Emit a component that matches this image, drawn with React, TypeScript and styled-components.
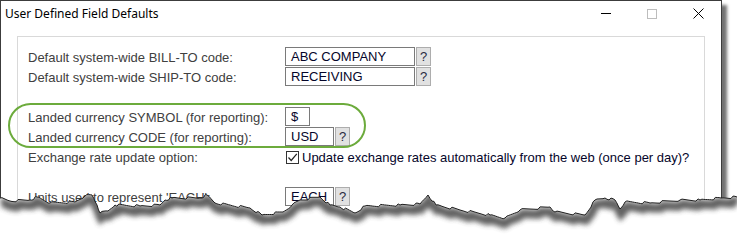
import styled, { createGlobalStyle } from "styled-components";

const GlobalStyle = createGlobalStyle`
  html, body {
    margin: 0;
    padding: 0;
    background: #ffffff;
  }
`;

const Page = styled.div`
  position: relative;
  width: 737px;
  height: 240px;
  overflow: hidden;
  background: #ffffff;
`;

const Window = styled.div`
  width: 722px;
  height: 270px;
  box-sizing: border-box;
  border: 1px solid #3c3c3c;
  background: #ffffff;
  box-shadow: 5px 5px 3px rgba(0, 0, 0, 0.55);
  display: flex;
  flex-direction: column;
`;

const TitleBar = styled.div`
  height: 30px;
  display: flex;
  align-items: flex-start;
  justify-content: space-between;
`;

const Title = styled.div`
  padding: 4px 0 0 4px;
  font-family: "Segoe UI", "Noto Sans", sans-serif;
  font-size: 12px;
  line-height: 17px;
  color: #000;
`;

const Controls = styled.div`
  display: flex;
`;

const CaptionButton = styled.div`
  width: 46px;
  height: 25px;
  display: flex;
  align-items: center;
  justify-content: center;
`;

const MinLine = styled.div`
  width: 10px;
  height: 1px;
  background: #000;
`;

const MaxBox = styled.div`
  width: 10px;
  height: 10px;
  box-sizing: border-box;
  border: 1px solid #bdbdbd;
`;

const GroupBox = styled.div`
  margin: 10px 16px 0 16px;
  border: 1px solid #d9d9d9;
  padding: 10px 10px 0 10px;
  height: 300px;
`;

const Row = styled.div`
  display: grid;
  grid-template-columns: 257px auto;
  align-items: center;
  height: 20px;
`;

const Spacer = styled.div`
  height: 20px;
`;

const Label = styled.div`
  font-family: "Liberation Sans", Arial, sans-serif;
  font-size: 13px;
  color: #404040;
  white-space: nowrap;
`;

const Field = styled.div`
  display: flex;
  align-items: flex-start;
  gap: 1px;
  height: 20px;
`;

const TextBox = styled.div<{ $w: number }>`
  width: ${(p) => p.$w}px;
  height: 19px;
  box-sizing: border-box;
  border: 1px solid #7a7a7a;
  padding-left: 5px;
  font-family: "Liberation Sans", Arial, sans-serif;
  font-size: 13px;
  line-height: 17px;
  color: #05052a;
  white-space: nowrap;
  overflow: hidden;
`;

const HelpButton = styled.div`
  width: 15px;
  height: 19px;
  box-sizing: border-box;
  border: 1px solid #adadad;
  background: #e1e1e1;
  font-family: "Liberation Sans", Arial, sans-serif;
  font-size: 13px;
  line-height: 17px;
  text-align: center;
  color: #2a2a40;
`;

// green annotation ring drawn over the two currency rows
const Highlight = styled.div`
  position: relative;

  &::after {
    content: "";
    position: absolute;
    left: -20px;
    top: -4px;
    width: 358px;
    height: 45px;
    box-sizing: border-box;
    border: 2px solid #6cab3c;
    border-radius: 23px;
    pointer-events: none;
  }
`;

const CheckRow = styled.div`
  display: flex;
  align-items: center;
  gap: 3px;
  padding-left: 1px;
  font-family: "Liberation Sans", Arial, sans-serif;
  font-size: 13px;
  color: #05052a;
  white-space: nowrap;
`;

const CheckBox = styled.div`
  width: 13px;
  height: 13px;
  box-sizing: border-box;
  border: 1px solid #333;
  background: #fff;
  display: flex;
  align-items: center;
  justify-content: center;
`;

const Torn = styled.svg`
  position: absolute;
  left: 0;
  top: 185px;
`;

const KEYS: [number, number][] = [
  [0, 198], [10, 201], [30, 200], [37, 197], [50, 203], [75, 202], [85, 196],
  [92, 195], [97, 205], [100, 213], [108, 211], [115, 205], [140, 206],
  [160, 205], [165, 200], [172, 198], [200, 198], [207, 195], [215, 203],
  [250, 208], [262, 215], [283, 212], [292, 205], [300, 200], [320, 197],
  [330, 205], [340, 207], [355, 213], [365, 206], [400, 205], [420, 204],
  [428, 195], [436, 205], [460, 210], [490, 215], [505, 218], [520, 210],
  [550, 207], [555, 212], [585, 215], [595, 200], [605, 198], [615, 200],
  [620, 209], [625, 202], [650, 203], [680, 200], [700, 200], [721, 198],
  [737, 197],
];

function edgePoints() {
  const pts: string[] = [];
  let n = 0;
  for (let i = 0; i < KEYS.length - 1; i++) {
    const [x1, y1] = KEYS[i];
    const [x2, y2] = KEYS[i + 1];
    const steps = Math.max(1, Math.round((x2 - x1) / 2));
    for (let s = 0; s < steps; s++) {
      const t = s / steps;
      const jitter = s === 0 ? 0 : (((n * 37) % 9) - 4) / 3.5;
      pts.push(`${(x1 + (x2 - x1) * t).toFixed(1)},${(y1 + (y2 - y1) * t + jitter).toFixed(1)}`);
      n++;
    }
  }
  pts.push(`${KEYS[KEYS.length - 1][0]},${KEYS[KEYS.length - 1][1]}`);
  return pts.join(" ");
}

function TornEdge() {
  const line = edgePoints();
  const below = `${line} 737,240 0,240`;
  return (
    <Torn width={737} height={55} viewBox="0 185 737 55">
      <defs>
        <filter id="blur" x="-5%" y="-50%" width="110%" height="200%">
          <feGaussianBlur stdDeviation="2.5" />
        </filter>
        <clipPath id="below">
          <polygon points={below} />
        </clipPath>
      </defs>
      <polygon points={below} fill="#ffffff" />
      <g clipPath="url(#below)">
        <polyline
          points={line}
          fill="none"
          stroke="#3a3a3a"
          strokeWidth={9}
          opacity={0.8}
          filter="url(#blur)"
          transform="translate(1,5)"
        />
      </g>
      <polyline points={line} fill="none" stroke="#1e1e1e" strokeWidth={1} />
    </Torn>
  );
}

export default function App() {
  return (
    <Page>
      <GlobalStyle />
      <Window>
        <TitleBar>
          <Title>User Defined Field Defaults</Title>
          <Controls>
            <CaptionButton>
              <MinLine />
            </CaptionButton>
            <CaptionButton>
              <MaxBox />
            </CaptionButton>
            <CaptionButton>
              <svg width="11" height="11" viewBox="0 0 11 11">
                <path d="M0.5 0.5 L10.5 10.5 M10.5 0.5 L0.5 10.5" stroke="#000" strokeWidth="1" />
              </svg>
            </CaptionButton>
          </Controls>
        </TitleBar>

        <GroupBox>
          <Row>
            <Label>Default system-wide BILL-TO code:</Label>
            <Field>
              <TextBox $w={130}>ABC COMPANY</TextBox>
              <HelpButton>?</HelpButton>
            </Field>
          </Row>
          <Row>
            <Label>Default system-wide SHIP-TO code:</Label>
            <Field>
              <TextBox $w={130}>RECEIVING</TextBox>
              <HelpButton>?</HelpButton>
            </Field>
          </Row>
          <Spacer />
          <Highlight>
            <Row>
              <Label>Landed currency SYMBOL (for reporting):</Label>
              <Field>
                <TextBox $w={25}>$</TextBox>
              </Field>
            </Row>
            <Row>
              <Label>Landed currency CODE (for reporting):</Label>
              <Field>
                <TextBox $w={49}>USD</TextBox>
                <HelpButton>?</HelpButton>
              </Field>
            </Row>
          </Highlight>
          <Row>
            <Label>Exchange rate update option:</Label>
            <CheckRow>
              <CheckBox>
                <svg width="11" height="11" viewBox="0 0 11 11">
                  <path d="M1.5 5.5 L4.2 8.5 L9.8 1.8" fill="none" stroke="#222" strokeWidth="1.2" />
                </svg>
              </CheckBox>
              Update exchange rates automatically from the web (once per day)?
            </CheckRow>
          </Row>
          <Spacer />
          <Row>
            <Label>Units used to represent 'EACH':</Label>
            <Field>
              <TextBox $w={49}>EACH</TextBox>
              <HelpButton>?</HelpButton>
            </Field>
          </Row>
        </GroupBox>
      </Window>
      <TornEdge />
    </Page>
  );
}
